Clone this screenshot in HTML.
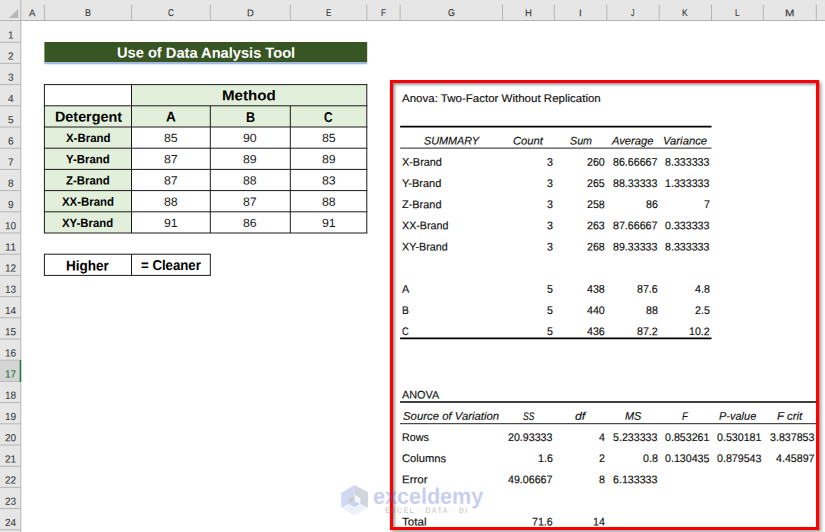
<!DOCTYPE html>
<html lang="en"><head><meta charset="utf-8"><title>Use of Data Analysis Tool</title>
<style>
html,body{margin:0;padding:0;background:#fff}
body{width:825px;height:532px;overflow:hidden;position:relative;font-family:"Liberation Sans",sans-serif}
#sheet{position:absolute;left:0;top:0;width:825px;height:532px;overflow:hidden}
#sheet svg{position:absolute;left:0;top:0}
#sheet div{position:absolute}
.t{position:absolute;white-space:pre;line-height:1.117;transform-origin:0 50%;display:block}
</style></head><body>
<div id="sheet">
<svg width="825" height="532" viewBox="0 0 825 532">
<defs><filter id="bl" x="-5%" y="-5%" width="110%" height="110%"><feGaussianBlur stdDeviation="1.6"/></filter></defs>
<rect x="0.00" y="0.00" width="825.00" height="20.50" fill="#e6e6e6" />
<rect x="0.00" y="0.00" width="20.80" height="532.00" fill="#e6e6e6" />
<rect x="0.00" y="360.70" width="20.00" height="20.20" fill="#d4d4d4" />
<line x1="0.00" y1="20.50" x2="825.00" y2="20.50" stroke="#b4b4b4" stroke-width="1"/>
<line x1="20.80" y1="0.00" x2="20.80" y2="532.00" stroke="#b4b4b4" stroke-width="1"/>
<line x1="44.40" y1="4.60" x2="44.40" y2="20.50" stroke="#b4b4b4" stroke-width="1"/>
<line x1="131.50" y1="4.60" x2="131.50" y2="20.50" stroke="#b4b4b4" stroke-width="1"/>
<line x1="210.30" y1="4.60" x2="210.30" y2="20.50" stroke="#b4b4b4" stroke-width="1"/>
<line x1="290.30" y1="4.60" x2="290.30" y2="20.50" stroke="#b4b4b4" stroke-width="1"/>
<line x1="366.80" y1="4.60" x2="366.80" y2="20.50" stroke="#b4b4b4" stroke-width="1"/>
<line x1="400.10" y1="4.60" x2="400.10" y2="20.50" stroke="#b4b4b4" stroke-width="1"/>
<line x1="502.50" y1="4.60" x2="502.50" y2="20.50" stroke="#b4b4b4" stroke-width="1"/>
<line x1="554.30" y1="4.60" x2="554.30" y2="20.50" stroke="#b4b4b4" stroke-width="1"/>
<line x1="606.80" y1="4.60" x2="606.80" y2="20.50" stroke="#b4b4b4" stroke-width="1"/>
<line x1="659.20" y1="4.60" x2="659.20" y2="20.50" stroke="#b4b4b4" stroke-width="1"/>
<line x1="711.50" y1="4.60" x2="711.50" y2="20.50" stroke="#b4b4b4" stroke-width="1"/>
<line x1="763.30" y1="4.60" x2="763.30" y2="20.50" stroke="#b4b4b4" stroke-width="1"/>
<line x1="816.30" y1="4.60" x2="816.30" y2="20.50" stroke="#b4b4b4" stroke-width="1"/>
<line x1="0.00" y1="42.20" x2="20.80" y2="42.20" stroke="#b4b4b4" stroke-width="1"/>
<line x1="0.00" y1="63.40" x2="20.80" y2="63.40" stroke="#b4b4b4" stroke-width="1"/>
<line x1="0.00" y1="84.60" x2="20.80" y2="84.60" stroke="#b4b4b4" stroke-width="1"/>
<line x1="0.00" y1="105.80" x2="20.80" y2="105.80" stroke="#b4b4b4" stroke-width="1"/>
<line x1="0.00" y1="127.00" x2="20.80" y2="127.00" stroke="#b4b4b4" stroke-width="1"/>
<line x1="0.00" y1="148.20" x2="20.80" y2="148.20" stroke="#b4b4b4" stroke-width="1"/>
<line x1="0.00" y1="169.40" x2="20.80" y2="169.40" stroke="#b4b4b4" stroke-width="1"/>
<line x1="0.00" y1="190.60" x2="20.80" y2="190.60" stroke="#b4b4b4" stroke-width="1"/>
<line x1="0.00" y1="211.80" x2="20.80" y2="211.80" stroke="#b4b4b4" stroke-width="1"/>
<line x1="0.00" y1="233.00" x2="20.80" y2="233.00" stroke="#b4b4b4" stroke-width="1"/>
<line x1="0.00" y1="254.20" x2="20.80" y2="254.20" stroke="#b4b4b4" stroke-width="1"/>
<line x1="0.00" y1="275.40" x2="20.80" y2="275.40" stroke="#b4b4b4" stroke-width="1"/>
<line x1="0.00" y1="296.60" x2="20.80" y2="296.60" stroke="#b4b4b4" stroke-width="1"/>
<line x1="0.00" y1="317.80" x2="20.80" y2="317.80" stroke="#b4b4b4" stroke-width="1"/>
<line x1="0.00" y1="339.00" x2="20.80" y2="339.00" stroke="#b4b4b4" stroke-width="1"/>
<line x1="0.00" y1="360.20" x2="20.80" y2="360.20" stroke="#b4b4b4" stroke-width="1"/>
<line x1="0.00" y1="381.40" x2="20.80" y2="381.40" stroke="#b4b4b4" stroke-width="1"/>
<line x1="0.00" y1="402.60" x2="20.80" y2="402.60" stroke="#b4b4b4" stroke-width="1"/>
<line x1="0.00" y1="423.80" x2="20.80" y2="423.80" stroke="#b4b4b4" stroke-width="1"/>
<line x1="0.00" y1="445.00" x2="20.80" y2="445.00" stroke="#b4b4b4" stroke-width="1"/>
<line x1="0.00" y1="466.20" x2="20.80" y2="466.20" stroke="#b4b4b4" stroke-width="1"/>
<line x1="0.00" y1="487.40" x2="20.80" y2="487.40" stroke="#b4b4b4" stroke-width="1"/>
<line x1="0.00" y1="508.60" x2="20.80" y2="508.60" stroke="#b4b4b4" stroke-width="1"/>
<line x1="0.00" y1="529.80" x2="20.80" y2="529.80" stroke="#b4b4b4" stroke-width="1"/>
<rect x="19.7" y="360.00" width="1.45" height="22.00" fill="#107c41"/>
<polygon points="18.2,8.8 18.2,18 9,18" fill="#b7b7b7"/>
<rect x="44.40" y="42.00" width="322.80" height="20.00" fill="#375623" />
<rect x="44.40" y="62.00" width="322.80" height="2.30" fill="#a3b8e3" />
<rect x="131.50" y="84.60" width="235.30" height="42.40" fill="#e2efda" />
<rect x="44.40" y="105.80" width="87.10" height="127.20" fill="#e2efda" />
<line x1="43.90" y1="84.60" x2="367.30" y2="84.60" stroke="#1a1a1a" stroke-width="1"/>
<line x1="43.90" y1="105.80" x2="367.30" y2="105.80" stroke="#1a1a1a" stroke-width="1"/>
<line x1="43.90" y1="127.00" x2="367.30" y2="127.00" stroke="#1a1a1a" stroke-width="1"/>
<line x1="43.90" y1="148.20" x2="367.30" y2="148.20" stroke="#1a1a1a" stroke-width="1"/>
<line x1="43.90" y1="169.40" x2="367.30" y2="169.40" stroke="#1a1a1a" stroke-width="1"/>
<line x1="43.90" y1="190.60" x2="367.30" y2="190.60" stroke="#1a1a1a" stroke-width="1"/>
<line x1="43.90" y1="211.80" x2="367.30" y2="211.80" stroke="#1a1a1a" stroke-width="1"/>
<line x1="43.90" y1="233.00" x2="367.30" y2="233.00" stroke="#1a1a1a" stroke-width="1"/>
<line x1="44.40" y1="84.60" x2="44.40" y2="233.00" stroke="#1a1a1a" stroke-width="1"/>
<line x1="131.50" y1="84.60" x2="131.50" y2="233.00" stroke="#1a1a1a" stroke-width="1"/>
<line x1="210.30" y1="105.80" x2="210.30" y2="233.00" stroke="#1a1a1a" stroke-width="1"/>
<line x1="290.30" y1="105.80" x2="290.30" y2="233.00" stroke="#1a1a1a" stroke-width="1"/>
<line x1="366.80" y1="84.60" x2="366.80" y2="233.00" stroke="#1a1a1a" stroke-width="1"/>
<line x1="43.90" y1="254.20" x2="210.80" y2="254.20" stroke="#1a1a1a" stroke-width="1"/>
<line x1="43.90" y1="275.40" x2="210.80" y2="275.40" stroke="#1a1a1a" stroke-width="1"/>
<line x1="44.40" y1="254.20" x2="44.40" y2="275.40" stroke="#1a1a1a" stroke-width="1"/>
<line x1="131.50" y1="254.20" x2="131.50" y2="275.40" stroke="#1a1a1a" stroke-width="1"/>
<line x1="210.30" y1="254.20" x2="210.30" y2="275.40" stroke="#1a1a1a" stroke-width="1"/>
<rect x="392.09999999999997" y="82.2" width="429.30000000000007" height="450.04999999999995" fill="#727c7e" opacity="0.65" filter="url(#bl)"/>
<rect x="389.90" y="80.00" width="429.30" height="450.05" fill="#ff0000" />
<g>
<path d="M341.2 492.7 L354.7 485.1 L354.7 495.3 L348.9 498.3 L348.9 503.9 L341.2 508.1 Z" fill="#cfd9f6"/>
<path d="M354.7 485.1 L367.9 492.3 L367.9 507.7 L360.2 503.9 L360.2 498.3 L354.7 495.3 Z" fill="#d0d4db"/>
<path d="M341.2 508.1 L348.9 503.9 L354.7 506.9 L360.2 503.9 L367.9 507.7 L354.7 515.6 Z" fill="#edf1f8"/>
<path d="M348.9 498.3 L354.7 495.3 L354.7 501.3 L348.9 503.9 Z" fill="#c9ccd3"/>
<path d="M354.7 495.3 L360.2 498.3 L360.2 503.9 L354.7 501.3 Z" fill="#f4f6fb"/>
<path d="M348.9 503.9 L354.7 501.3 L360.2 503.9 L354.7 506.9 Z" fill="#c6d3f5"/>
</g>
</svg>
<span class="t" style="left:29.42px;top:7px;line-height:11px;font-size:9.90px;font-weight:400;font-style:normal;color:#3c3c3c;-webkit-text-stroke:0.15px #3c3c3c;transform:translateY(0.20px) rotate(0.03deg) scaleX(0.9647)">A</span>
<span class="t" style="left:84.96px;top:7px;line-height:11px;font-size:9.90px;font-weight:400;font-style:normal;color:#3c3c3c;-webkit-text-stroke:0.15px #3c3c3c;transform:translateY(0.20px) rotate(0.03deg) scaleX(0.9069)">B</span>
<span class="t" style="left:167.96px;top:7px;line-height:11px;font-size:9.90px;font-weight:400;font-style:normal;color:#3c3c3c;-webkit-text-stroke:0.15px #3c3c3c;transform:translateY(0.20px) rotate(0.03deg) scaleX(0.8210)">C</span>
<span class="t" style="left:246.91px;top:7px;line-height:11px;font-size:9.90px;font-weight:400;font-style:normal;color:#3c3c3c;-webkit-text-stroke:0.15px #3c3c3c;transform:translateY(0.20px) rotate(0.03deg) scaleX(0.9474)">D</span>
<span class="t" style="left:325.86px;top:7px;line-height:11px;font-size:9.90px;font-weight:400;font-style:normal;color:#3c3c3c;-webkit-text-stroke:0.15px #3c3c3c;transform:translateY(0.20px) rotate(0.03deg) scaleX(0.8141)">E</span>
<span class="t" style="left:380.92px;top:7px;line-height:11px;font-size:9.90px;font-weight:400;font-style:normal;color:#3c3c3c;-webkit-text-stroke:0.15px #3c3c3c;transform:translateY(0.20px) rotate(0.03deg) scaleX(0.8364)">F</span>
<span class="t" style="left:447.83px;top:7px;line-height:11px;font-size:9.90px;font-weight:400;font-style:normal;color:#3c3c3c;-webkit-text-stroke:0.15px #3c3c3c;transform:translateY(0.20px) rotate(0.03deg) scaleX(0.9019)">G</span>
<span class="t" style="left:524.97px;top:7px;line-height:11px;font-size:9.90px;font-weight:400;font-style:normal;color:#3c3c3c;-webkit-text-stroke:0.15px #3c3c3c;transform:translateY(0.20px) rotate(0.03deg) scaleX(0.9594)">H</span>
<span class="t" style="left:579.16px;top:7px;line-height:11px;font-size:9.90px;font-weight:400;font-style:normal;color:#3c3c3c;-webkit-text-stroke:0.15px #3c3c3c;transform:translateY(0.20px) rotate(0.03deg) scaleX(1.0085)">I</span>
<span class="t" style="left:631.24px;top:7px;line-height:11px;font-size:9.90px;font-weight:400;font-style:normal;color:#3c3c3c;-webkit-text-stroke:0.15px #3c3c3c;transform:translateY(0.20px) rotate(0.03deg) scaleX(0.7091)">J</span>
<span class="t" style="left:682.49px;top:7px;line-height:11px;font-size:9.90px;font-weight:400;font-style:normal;color:#3c3c3c;-webkit-text-stroke:0.15px #3c3c3c;transform:translateY(0.20px) rotate(0.03deg) scaleX(0.8662)">K</span>
<span class="t" style="left:735.09px;top:7px;line-height:11px;font-size:9.90px;font-weight:400;font-style:normal;color:#3c3c3c;-webkit-text-stroke:0.15px #3c3c3c;transform:translateY(0.20px) rotate(0.03deg) scaleX(0.8406)">L</span>
<span class="t" style="left:785.09px;top:7px;line-height:11px;font-size:9.90px;font-weight:400;font-style:normal;color:#3c3c3c;-webkit-text-stroke:0.15px #3c3c3c;transform:translateY(0.20px) rotate(0.03deg) scaleX(1.1413)">M</span>
<span class="t" style="left:7.91px;top:29px;line-height:11px;font-size:10.30px;font-weight:400;font-style:normal;color:#3c3c3c;-webkit-text-stroke:0.1px #3c3c3c;transform:translateY(0.40px) rotate(0.03deg) scaleX(0.9741)">1</span>
<span class="t" style="left:7.91px;top:50px;line-height:11px;font-size:10.30px;font-weight:400;font-style:normal;color:#3c3c3c;-webkit-text-stroke:0.1px #3c3c3c;transform:translateY(0.60px) rotate(0.03deg) scaleX(0.9741)">2</span>
<span class="t" style="left:7.91px;top:71px;line-height:11px;font-size:10.30px;font-weight:400;font-style:normal;color:#3c3c3c;-webkit-text-stroke:0.1px #3c3c3c;transform:translateY(0.80px) rotate(0.03deg) scaleX(0.9741)">3</span>
<span class="t" style="left:7.91px;top:93px;line-height:11px;font-size:10.30px;font-weight:400;font-style:normal;color:#3c3c3c;-webkit-text-stroke:0.1px #3c3c3c;transform:translateY(0.00px) rotate(0.03deg) scaleX(0.9741)">4</span>
<span class="t" style="left:7.91px;top:114px;line-height:11px;font-size:10.30px;font-weight:400;font-style:normal;color:#3c3c3c;-webkit-text-stroke:0.1px #3c3c3c;transform:translateY(0.20px) rotate(0.03deg) scaleX(0.9741)">5</span>
<span class="t" style="left:7.91px;top:135px;line-height:11px;font-size:10.30px;font-weight:400;font-style:normal;color:#3c3c3c;-webkit-text-stroke:0.1px #3c3c3c;transform:translateY(0.40px) rotate(0.03deg) scaleX(0.9741)">6</span>
<span class="t" style="left:7.91px;top:156px;line-height:11px;font-size:10.30px;font-weight:400;font-style:normal;color:#3c3c3c;-webkit-text-stroke:0.1px #3c3c3c;transform:translateY(0.60px) rotate(0.03deg) scaleX(0.9741)">7</span>
<span class="t" style="left:7.91px;top:177px;line-height:11px;font-size:10.30px;font-weight:400;font-style:normal;color:#3c3c3c;-webkit-text-stroke:0.1px #3c3c3c;transform:translateY(0.80px) rotate(0.03deg) scaleX(0.9741)">8</span>
<span class="t" style="left:7.91px;top:198px;line-height:11px;font-size:10.30px;font-weight:400;font-style:normal;color:#3c3c3c;-webkit-text-stroke:0.1px #3c3c3c;transform:translateY(1.00px) rotate(0.03deg) scaleX(0.9741)">9</span>
<span class="t" style="left:5.12px;top:220px;line-height:11px;font-size:10.30px;font-weight:400;font-style:normal;color:#3c3c3c;-webkit-text-stroke:0.1px #3c3c3c;transform:translateY(0.20px) rotate(0.03deg) scaleX(0.9741)">10</span>
<span class="t" style="left:5.12px;top:241px;line-height:11px;font-size:10.30px;font-weight:400;font-style:normal;color:#3c3c3c;-webkit-text-stroke:0.1px #3c3c3c;transform:translateY(0.40px) rotate(0.03deg) scaleX(1.0437)">11</span>
<span class="t" style="left:5.12px;top:262px;line-height:11px;font-size:10.30px;font-weight:400;font-style:normal;color:#3c3c3c;-webkit-text-stroke:0.1px #3c3c3c;transform:translateY(0.60px) rotate(0.03deg) scaleX(0.9741)">12</span>
<span class="t" style="left:5.12px;top:283px;line-height:11px;font-size:10.30px;font-weight:400;font-style:normal;color:#3c3c3c;-webkit-text-stroke:0.1px #3c3c3c;transform:translateY(0.80px) rotate(0.03deg) scaleX(0.9741)">13</span>
<span class="t" style="left:5.12px;top:305px;line-height:11px;font-size:10.30px;font-weight:400;font-style:normal;color:#3c3c3c;-webkit-text-stroke:0.1px #3c3c3c;transform:translateY(0.00px) rotate(0.03deg) scaleX(0.9741)">14</span>
<span class="t" style="left:5.12px;top:326px;line-height:11px;font-size:10.30px;font-weight:400;font-style:normal;color:#3c3c3c;-webkit-text-stroke:0.1px #3c3c3c;transform:translateY(0.20px) rotate(0.03deg) scaleX(0.9741)">15</span>
<span class="t" style="left:5.12px;top:347px;line-height:11px;font-size:10.30px;font-weight:400;font-style:normal;color:#3c3c3c;-webkit-text-stroke:0.1px #3c3c3c;transform:translateY(0.40px) rotate(0.03deg) scaleX(0.9741)">16</span>
<span class="t" style="left:5.12px;top:368px;line-height:11px;font-size:10.30px;font-weight:400;font-style:normal;color:#1d6b40;-webkit-text-stroke:0.1px #1d6b40;transform:translateY(0.60px) rotate(0.03deg) scaleX(0.9741)">17</span>
<span class="t" style="left:5.12px;top:389px;line-height:11px;font-size:10.30px;font-weight:400;font-style:normal;color:#3c3c3c;-webkit-text-stroke:0.1px #3c3c3c;transform:translateY(0.80px) rotate(0.03deg) scaleX(0.9741)">18</span>
<span class="t" style="left:5.12px;top:411px;line-height:11px;font-size:10.30px;font-weight:400;font-style:normal;color:#3c3c3c;-webkit-text-stroke:0.1px #3c3c3c;transform:translateY(0.00px) rotate(0.03deg) scaleX(0.9741)">19</span>
<span class="t" style="left:5.12px;top:432px;line-height:11px;font-size:10.30px;font-weight:400;font-style:normal;color:#3c3c3c;-webkit-text-stroke:0.1px #3c3c3c;transform:translateY(0.20px) rotate(0.03deg) scaleX(0.9741)">20</span>
<span class="t" style="left:5.12px;top:453px;line-height:11px;font-size:10.30px;font-weight:400;font-style:normal;color:#3c3c3c;-webkit-text-stroke:0.1px #3c3c3c;transform:translateY(0.40px) rotate(0.03deg) scaleX(0.9741)">21</span>
<span class="t" style="left:5.12px;top:474px;line-height:11px;font-size:10.30px;font-weight:400;font-style:normal;color:#3c3c3c;-webkit-text-stroke:0.1px #3c3c3c;transform:translateY(0.60px) rotate(0.03deg) scaleX(0.9741)">22</span>
<span class="t" style="left:5.12px;top:495px;line-height:11px;font-size:10.30px;font-weight:400;font-style:normal;color:#3c3c3c;-webkit-text-stroke:0.1px #3c3c3c;transform:translateY(0.80px) rotate(0.03deg) scaleX(0.9741)">23</span>
<span class="t" style="left:5.12px;top:517px;line-height:11px;font-size:10.30px;font-weight:400;font-style:normal;color:#3c3c3c;-webkit-text-stroke:0.1px #3c3c3c;transform:translateY(0.00px) rotate(0.03deg) scaleX(0.9741)">24</span>
<span class="t" style="left:117.18px;top:44px;line-height:16px;font-size:14.60px;font-weight:700;font-style:normal;color:#fff;transform:translateY(0.60px) rotate(0.03deg) scaleX(1.0032)">Use of Data Analysis Tool</span>
<span class="t" style="left:222.26px;top:87px;line-height:16px;font-size:14.24px;font-weight:700;font-style:normal;color:#000;transform:translateY(0.30px) rotate(0.03deg) scaleX(1.0625)">Method</span>
<span class="t" style="left:55.02px;top:108px;line-height:16px;font-size:14.24px;font-weight:700;font-style:normal;color:#000;transform:translateY(0.60px) rotate(0.03deg) scaleX(1.0089)">Detergent</span>
<span class="t" style="left:166.00px;top:108px;line-height:16px;font-size:14.24px;font-weight:700;font-style:normal;color:#000;transform:translateY(0.60px) rotate(0.03deg) scaleX(0.9522)">A</span>
<span class="t" style="left:245.77px;top:108px;line-height:16px;font-size:14.24px;font-weight:700;font-style:normal;color:#000;transform:translateY(0.60px) rotate(0.03deg) scaleX(0.8809)">B</span>
<span class="t" style="left:324.27px;top:108px;line-height:16px;font-size:14.24px;font-weight:700;font-style:normal;color:#000;transform:translateY(0.60px) rotate(0.03deg) scaleX(0.8317)">C</span>
<span class="t" style="left:65.71px;top:131px;line-height:14px;font-size:11.93px;font-weight:700;font-style:normal;color:#000;transform:translateY(0.10px) rotate(0.03deg) scaleX(0.9589)">X-Brand</span>
<span class="t" style="left:164.04px;top:131px;line-height:14px;font-size:11.93px;font-weight:400;font-style:normal;color:#1a1a1a;transform:translateY(0.10px) rotate(0.03deg) scaleX(1.0342)">85</span>
<span class="t" style="left:243.44px;top:131px;line-height:14px;font-size:11.93px;font-weight:400;font-style:normal;color:#1a1a1a;transform:translateY(0.10px) rotate(0.03deg) scaleX(1.0342)">90</span>
<span class="t" style="left:321.69px;top:131px;line-height:14px;font-size:11.93px;font-weight:400;font-style:normal;color:#1a1a1a;transform:translateY(0.10px) rotate(0.03deg) scaleX(1.0342)">85</span>
<span class="t" style="left:66.07px;top:152px;line-height:14px;font-size:11.93px;font-weight:700;font-style:normal;color:#000;transform:translateY(0.30px) rotate(0.03deg) scaleX(0.9569)">Y-Brand</span>
<span class="t" style="left:164.04px;top:152px;line-height:14px;font-size:11.93px;font-weight:400;font-style:normal;color:#1a1a1a;transform:translateY(0.30px) rotate(0.03deg) scaleX(1.0342)">87</span>
<span class="t" style="left:243.44px;top:152px;line-height:14px;font-size:11.93px;font-weight:400;font-style:normal;color:#1a1a1a;transform:translateY(0.30px) rotate(0.03deg) scaleX(1.0342)">89</span>
<span class="t" style="left:321.69px;top:152px;line-height:14px;font-size:11.93px;font-weight:400;font-style:normal;color:#1a1a1a;transform:translateY(0.30px) rotate(0.03deg) scaleX(1.0342)">89</span>
<span class="t" style="left:66.11px;top:173px;line-height:14px;font-size:11.93px;font-weight:700;font-style:normal;color:#000;transform:translateY(0.50px) rotate(0.03deg) scaleX(0.9557)">Z-Brand</span>
<span class="t" style="left:164.04px;top:173px;line-height:14px;font-size:11.93px;font-weight:400;font-style:normal;color:#1a1a1a;transform:translateY(0.50px) rotate(0.03deg) scaleX(1.0342)">87</span>
<span class="t" style="left:243.44px;top:173px;line-height:14px;font-size:11.93px;font-weight:400;font-style:normal;color:#1a1a1a;transform:translateY(0.50px) rotate(0.03deg) scaleX(1.0342)">88</span>
<span class="t" style="left:321.69px;top:173px;line-height:14px;font-size:11.93px;font-weight:400;font-style:normal;color:#1a1a1a;transform:translateY(0.50px) rotate(0.03deg) scaleX(1.0342)">83</span>
<span class="t" style="left:61.99px;top:194px;line-height:14px;font-size:11.93px;font-weight:700;font-style:normal;color:#000;transform:translateY(0.70px) rotate(0.03deg) scaleX(0.9557)">XX-Brand</span>
<span class="t" style="left:164.04px;top:194px;line-height:14px;font-size:11.93px;font-weight:400;font-style:normal;color:#1a1a1a;transform:translateY(0.70px) rotate(0.03deg) scaleX(1.0342)">88</span>
<span class="t" style="left:243.44px;top:194px;line-height:14px;font-size:11.93px;font-weight:400;font-style:normal;color:#1a1a1a;transform:translateY(0.70px) rotate(0.03deg) scaleX(1.0342)">87</span>
<span class="t" style="left:321.69px;top:194px;line-height:14px;font-size:11.93px;font-weight:400;font-style:normal;color:#1a1a1a;transform:translateY(0.70px) rotate(0.03deg) scaleX(1.0342)">88</span>
<span class="t" style="left:62.35px;top:215px;line-height:14px;font-size:11.93px;font-weight:700;font-style:normal;color:#000;transform:translateY(0.90px) rotate(0.03deg) scaleX(0.9540)">XY-Brand</span>
<span class="t" style="left:164.04px;top:215px;line-height:14px;font-size:11.93px;font-weight:400;font-style:normal;color:#1a1a1a;transform:translateY(0.90px) rotate(0.03deg) scaleX(1.0342)">91</span>
<span class="t" style="left:243.44px;top:215px;line-height:14px;font-size:11.93px;font-weight:400;font-style:normal;color:#1a1a1a;transform:translateY(0.90px) rotate(0.03deg) scaleX(1.0342)">86</span>
<span class="t" style="left:321.69px;top:215px;line-height:14px;font-size:11.93px;font-weight:400;font-style:normal;color:#1a1a1a;transform:translateY(0.90px) rotate(0.03deg) scaleX(1.0342)">91</span>
<span class="t" style="left:65.64px;top:257px;line-height:16px;font-size:14.24px;font-weight:700;font-style:normal;color:#000;transform:translateY(0.40px) rotate(0.03deg) scaleX(0.9496)">Higher</span>
<span class="t" style="left:141.16px;top:257px;line-height:16px;font-size:14.24px;font-weight:700;font-style:normal;color:#000;transform:translateY(0.40px) rotate(0.03deg) scaleX(0.9281)">= Cleaner</span>
<div id="pic" style="left:393.00px;top:83.10px;width:423.10px;height:443.85px;background:#fff;box-shadow:inset 1.8px 1.8px 2.6px rgba(118,132,136,0.85)"></div>
<svg width="825" height="532" viewBox="0 0 825 532">
<line x1="400.10" y1="126.60" x2="711.50" y2="126.60" stroke="#000" stroke-width="1.7"/>
<line x1="400.10" y1="148.10" x2="711.50" y2="148.10" stroke="#222" stroke-width="1.0"/>
<line x1="400.10" y1="338.40" x2="711.50" y2="338.40" stroke="#000" stroke-width="1.7"/>
<line x1="400.10" y1="402.00" x2="816.20" y2="402.00" stroke="#000" stroke-width="1.7"/>
<line x1="400.10" y1="423.70" x2="816.20" y2="423.70" stroke="#222" stroke-width="1.0"/>
</svg>
<span class="t" style="left:402.40px;top:92px;line-height:12px;font-size:11.04px;font-weight:400;font-style:normal;color:#111;-webkit-text-stroke:0.15px #111;transform:translateY(0.00px) rotate(0.03deg) scaleX(1.0435)">Anova: Two-Factor Without Replication</span>
<span class="t" style="left:423.80px;top:134px;line-height:12px;font-size:11.04px;font-weight:400;font-style:italic;color:#111;-webkit-text-stroke:0.15px #111;transform:translateY(0.40px) rotate(0.03deg) scaleX(0.9823)">SUMMARY</span>
<span class="t" style="left:513.44px;top:134px;line-height:12px;font-size:11.04px;font-weight:400;font-style:italic;color:#111;-webkit-text-stroke:0.15px #111;transform:translateY(0.40px) rotate(0.03deg) scaleX(1.0161)">Count</span>
<span class="t" style="left:569.55px;top:134px;line-height:12px;font-size:11.04px;font-weight:400;font-style:italic;color:#111;-webkit-text-stroke:0.15px #111;transform:translateY(0.40px) rotate(0.03deg) scaleX(0.9699)">Sum</span>
<span class="t" style="left:612.24px;top:134px;line-height:12px;font-size:11.04px;font-weight:400;font-style:italic;color:#111;-webkit-text-stroke:0.15px #111;transform:translateY(0.40px) rotate(0.03deg) scaleX(1.0152)">Average</span>
<span class="t" style="left:663.30px;top:134px;line-height:12px;font-size:11.04px;font-weight:400;font-style:italic;color:#111;-webkit-text-stroke:0.15px #111;transform:translateY(0.40px) rotate(0.03deg) scaleX(1.0219)">Variance</span>
<span class="t" style="left:402.40px;top:155px;line-height:12px;font-size:11.04px;font-weight:400;font-style:normal;color:#111;-webkit-text-stroke:0.15px #111;transform:translateY(0.79px) rotate(0.03deg) scaleX(0.9860)">X-Brand</span>
<span class="t" style="left:546.56px;top:155px;line-height:12px;font-size:11.04px;font-weight:400;font-style:normal;color:#111;-webkit-text-stroke:0.15px #111;transform:translateY(0.79px) rotate(0.03deg) scaleX(0.9670)">3</span>
<span class="t" style="left:587.19px;top:155px;line-height:12px;font-size:11.04px;font-weight:400;font-style:normal;color:#111;-webkit-text-stroke:0.15px #111;transform:translateY(0.79px) rotate(0.03deg) scaleX(0.9670)">260</span>
<span class="t" style="left:612.90px;top:155px;line-height:12px;font-size:11.04px;font-weight:400;font-style:normal;color:#111;-webkit-text-stroke:0.15px #111;transform:translateY(0.79px) rotate(0.03deg) scaleX(0.9668)">86.66667</span>
<span class="t" style="left:665.20px;top:155px;line-height:12px;font-size:11.04px;font-weight:400;font-style:normal;color:#111;-webkit-text-stroke:0.15px #111;transform:translateY(0.79px) rotate(0.03deg) scaleX(0.9668)">8.333333</span>
<span class="t" style="left:402.40px;top:176px;line-height:12px;font-size:11.04px;font-weight:400;font-style:normal;color:#111;-webkit-text-stroke:0.15px #111;transform:translateY(0.96px) rotate(0.03deg) scaleX(0.9957)">Y-Brand</span>
<span class="t" style="left:546.56px;top:176px;line-height:12px;font-size:11.04px;font-weight:400;font-style:normal;color:#111;-webkit-text-stroke:0.15px #111;transform:translateY(0.96px) rotate(0.03deg) scaleX(0.9670)">3</span>
<span class="t" style="left:587.19px;top:176px;line-height:12px;font-size:11.04px;font-weight:400;font-style:normal;color:#111;-webkit-text-stroke:0.15px #111;transform:translateY(0.96px) rotate(0.03deg) scaleX(0.9670)">265</span>
<span class="t" style="left:612.90px;top:176px;line-height:12px;font-size:11.04px;font-weight:400;font-style:normal;color:#111;-webkit-text-stroke:0.15px #111;transform:translateY(0.96px) rotate(0.03deg) scaleX(0.9668)">88.33333</span>
<span class="t" style="left:665.20px;top:176px;line-height:12px;font-size:11.04px;font-weight:400;font-style:normal;color:#111;-webkit-text-stroke:0.15px #111;transform:translateY(0.96px) rotate(0.03deg) scaleX(0.9668)">1.333333</span>
<span class="t" style="left:402.40px;top:198px;line-height:12px;font-size:11.04px;font-weight:400;font-style:normal;color:#111;-webkit-text-stroke:0.15px #111;transform:translateY(0.12px) rotate(0.03deg) scaleX(0.9909)">Z-Brand</span>
<span class="t" style="left:546.56px;top:198px;line-height:12px;font-size:11.04px;font-weight:400;font-style:normal;color:#111;-webkit-text-stroke:0.15px #111;transform:translateY(0.12px) rotate(0.03deg) scaleX(0.9670)">3</span>
<span class="t" style="left:587.19px;top:198px;line-height:12px;font-size:11.04px;font-weight:400;font-style:normal;color:#111;-webkit-text-stroke:0.15px #111;transform:translateY(0.12px) rotate(0.03deg) scaleX(0.9670)">258</span>
<span class="t" style="left:645.53px;top:198px;line-height:12px;font-size:11.04px;font-weight:400;font-style:normal;color:#111;-webkit-text-stroke:0.15px #111;transform:translateY(0.12px) rotate(0.03deg) scaleX(0.9670)">86</span>
<span class="t" style="left:703.76px;top:198px;line-height:12px;font-size:11.04px;font-weight:400;font-style:normal;color:#111;-webkit-text-stroke:0.15px #111;transform:translateY(0.12px) rotate(0.03deg) scaleX(0.9670)">7</span>
<span class="t" style="left:402.40px;top:219px;line-height:12px;font-size:11.04px;font-weight:400;font-style:normal;color:#111;-webkit-text-stroke:0.15px #111;transform:translateY(0.29px) rotate(0.03deg) scaleX(0.9702)">XX-Brand</span>
<span class="t" style="left:546.56px;top:219px;line-height:12px;font-size:11.04px;font-weight:400;font-style:normal;color:#111;-webkit-text-stroke:0.15px #111;transform:translateY(0.29px) rotate(0.03deg) scaleX(0.9670)">3</span>
<span class="t" style="left:587.19px;top:219px;line-height:12px;font-size:11.04px;font-weight:400;font-style:normal;color:#111;-webkit-text-stroke:0.15px #111;transform:translateY(0.29px) rotate(0.03deg) scaleX(0.9670)">263</span>
<span class="t" style="left:612.90px;top:219px;line-height:12px;font-size:11.04px;font-weight:400;font-style:normal;color:#111;-webkit-text-stroke:0.15px #111;transform:translateY(0.29px) rotate(0.03deg) scaleX(0.9668)">87.66667</span>
<span class="t" style="left:665.20px;top:219px;line-height:12px;font-size:11.04px;font-weight:400;font-style:normal;color:#111;-webkit-text-stroke:0.15px #111;transform:translateY(0.29px) rotate(0.03deg) scaleX(0.9668)">0.333333</span>
<span class="t" style="left:402.40px;top:240px;line-height:12px;font-size:11.04px;font-weight:400;font-style:normal;color:#111;-webkit-text-stroke:0.15px #111;transform:translateY(0.45px) rotate(0.03deg) scaleX(0.9780)">XY-Brand</span>
<span class="t" style="left:546.56px;top:240px;line-height:12px;font-size:11.04px;font-weight:400;font-style:normal;color:#111;-webkit-text-stroke:0.15px #111;transform:translateY(0.45px) rotate(0.03deg) scaleX(0.9670)">3</span>
<span class="t" style="left:587.19px;top:240px;line-height:12px;font-size:11.04px;font-weight:400;font-style:normal;color:#111;-webkit-text-stroke:0.15px #111;transform:translateY(0.45px) rotate(0.03deg) scaleX(0.9670)">268</span>
<span class="t" style="left:612.90px;top:240px;line-height:12px;font-size:11.04px;font-weight:400;font-style:normal;color:#111;-webkit-text-stroke:0.15px #111;transform:translateY(0.45px) rotate(0.03deg) scaleX(0.9668)">89.33333</span>
<span class="t" style="left:665.20px;top:240px;line-height:12px;font-size:11.04px;font-weight:400;font-style:normal;color:#111;-webkit-text-stroke:0.15px #111;transform:translateY(0.45px) rotate(0.03deg) scaleX(0.9668)">8.333333</span>
<span class="t" style="left:402.40px;top:282px;line-height:12px;font-size:11.04px;font-weight:400;font-style:normal;color:#111;-webkit-text-stroke:0.15px #111;transform:translateY(0.78px) rotate(0.03deg) scaleX(0.9844)">A</span>
<span class="t" style="left:546.56px;top:282px;line-height:12px;font-size:11.04px;font-weight:400;font-style:normal;color:#111;-webkit-text-stroke:0.15px #111;transform:translateY(0.78px) rotate(0.03deg) scaleX(0.9670)">5</span>
<span class="t" style="left:587.19px;top:282px;line-height:12px;font-size:11.04px;font-weight:400;font-style:normal;color:#111;-webkit-text-stroke:0.15px #111;transform:translateY(0.78px) rotate(0.03deg) scaleX(0.9670)">438</span>
<span class="t" style="left:636.64px;top:282px;line-height:12px;font-size:11.04px;font-weight:400;font-style:normal;color:#111;-webkit-text-stroke:0.15px #111;transform:translateY(0.78px) rotate(0.03deg) scaleX(0.9666)">87.6</span>
<span class="t" style="left:694.87px;top:282px;line-height:12px;font-size:11.04px;font-weight:400;font-style:normal;color:#111;-webkit-text-stroke:0.15px #111;transform:translateY(0.78px) rotate(0.03deg) scaleX(0.9664)">4.8</span>
<span class="t" style="left:402.40px;top:303px;line-height:12px;font-size:11.04px;font-weight:400;font-style:normal;color:#111;-webkit-text-stroke:0.15px #111;transform:translateY(0.95px) rotate(0.03deg) scaleX(0.9255)">B</span>
<span class="t" style="left:546.56px;top:303px;line-height:12px;font-size:11.04px;font-weight:400;font-style:normal;color:#111;-webkit-text-stroke:0.15px #111;transform:translateY(0.95px) rotate(0.03deg) scaleX(0.9670)">5</span>
<span class="t" style="left:587.19px;top:303px;line-height:12px;font-size:11.04px;font-weight:400;font-style:normal;color:#111;-webkit-text-stroke:0.15px #111;transform:translateY(0.95px) rotate(0.03deg) scaleX(0.9670)">440</span>
<span class="t" style="left:645.53px;top:303px;line-height:12px;font-size:11.04px;font-weight:400;font-style:normal;color:#111;-webkit-text-stroke:0.15px #111;transform:translateY(0.95px) rotate(0.03deg) scaleX(0.9670)">88</span>
<span class="t" style="left:694.87px;top:303px;line-height:12px;font-size:11.04px;font-weight:400;font-style:normal;color:#111;-webkit-text-stroke:0.15px #111;transform:translateY(0.95px) rotate(0.03deg) scaleX(0.9664)">2.5</span>
<span class="t" style="left:402.40px;top:325px;line-height:12px;font-size:11.04px;font-weight:400;font-style:normal;color:#111;-webkit-text-stroke:0.15px #111;transform:translateY(0.12px) rotate(0.03deg) scaleX(0.8379)">C</span>
<span class="t" style="left:546.56px;top:325px;line-height:12px;font-size:11.04px;font-weight:400;font-style:normal;color:#111;-webkit-text-stroke:0.15px #111;transform:translateY(0.12px) rotate(0.03deg) scaleX(0.9670)">5</span>
<span class="t" style="left:587.19px;top:325px;line-height:12px;font-size:11.04px;font-weight:400;font-style:normal;color:#111;-webkit-text-stroke:0.15px #111;transform:translateY(0.12px) rotate(0.03deg) scaleX(0.9670)">436</span>
<span class="t" style="left:636.64px;top:325px;line-height:12px;font-size:11.04px;font-weight:400;font-style:normal;color:#111;-webkit-text-stroke:0.15px #111;transform:translateY(0.12px) rotate(0.03deg) scaleX(0.9666)">87.2</span>
<span class="t" style="left:688.94px;top:325px;line-height:12px;font-size:11.04px;font-weight:400;font-style:normal;color:#111;-webkit-text-stroke:0.15px #111;transform:translateY(0.12px) rotate(0.03deg) scaleX(0.9666)">10.2</span>
<span class="t" style="left:402.40px;top:388px;line-height:12px;font-size:11.04px;font-weight:400;font-style:normal;color:#111;-webkit-text-stroke:0.15px #111;transform:translateY(0.61px) rotate(0.03deg) scaleX(0.9846)">ANOVA</span>
<span class="t" style="left:403.19px;top:409px;line-height:12px;font-size:11.04px;font-weight:400;font-style:italic;color:#111;-webkit-text-stroke:0.15px #111;transform:translateY(0.77px) rotate(0.03deg) scaleX(1.0297)">Source of Variation</span>
<span class="t" style="left:522.74px;top:409px;line-height:12px;font-size:11.04px;font-weight:400;font-style:italic;color:#111;-webkit-text-stroke:0.15px #111;transform:translateY(0.77px) rotate(0.03deg) scaleX(0.7693)">SS</span>
<span class="t" style="left:575.42px;top:409px;line-height:12px;font-size:11.04px;font-weight:400;font-style:italic;color:#111;-webkit-text-stroke:0.15px #111;transform:translateY(0.77px) rotate(0.03deg) scaleX(1.1149)">df</span>
<span class="t" style="left:624.81px;top:409px;line-height:12px;font-size:11.04px;font-weight:400;font-style:italic;color:#111;-webkit-text-stroke:0.15px #111;transform:translateY(0.77px) rotate(0.03deg) scaleX(0.9889)">MS</span>
<span class="t" style="left:682.47px;top:409px;line-height:12px;font-size:11.04px;font-weight:400;font-style:italic;color:#111;-webkit-text-stroke:0.15px #111;transform:translateY(0.77px) rotate(0.03deg) scaleX(0.8536)">F</span>
<span class="t" style="left:718.77px;top:409px;line-height:12px;font-size:11.04px;font-weight:400;font-style:italic;color:#111;-webkit-text-stroke:0.15px #111;transform:translateY(0.77px) rotate(0.03deg) scaleX(0.9958)">P-value</span>
<span class="t" style="left:777.22px;top:409px;line-height:12px;font-size:11.04px;font-weight:400;font-style:italic;color:#111;-webkit-text-stroke:0.15px #111;transform:translateY(0.77px) rotate(0.03deg) scaleX(1.0345)">F crit</span>
<span class="t" style="left:402.40px;top:430px;line-height:12px;font-size:11.04px;font-weight:400;font-style:normal;color:#111;-webkit-text-stroke:0.15px #111;transform:translateY(0.94px) rotate(0.03deg) scaleX(0.9726)">Rows</span>
<span class="t" style="left:508.00px;top:430px;line-height:12px;font-size:11.04px;font-weight:400;font-style:normal;color:#111;-webkit-text-stroke:0.15px #111;transform:translateY(0.94px) rotate(0.03deg) scaleX(0.9668)">20.93333</span>
<span class="t" style="left:599.06px;top:430px;line-height:12px;font-size:11.04px;font-weight:400;font-style:normal;color:#111;-webkit-text-stroke:0.15px #111;transform:translateY(0.94px) rotate(0.03deg) scaleX(0.9670)">4</span>
<span class="t" style="left:612.90px;top:430px;line-height:12px;font-size:11.04px;font-weight:400;font-style:normal;color:#111;-webkit-text-stroke:0.15px #111;transform:translateY(0.94px) rotate(0.03deg) scaleX(0.9668)">5.233333</span>
<span class="t" style="left:665.20px;top:430px;line-height:12px;font-size:11.04px;font-weight:400;font-style:normal;color:#111;-webkit-text-stroke:0.15px #111;transform:translateY(0.94px) rotate(0.03deg) scaleX(0.9668)">0.853261</span>
<span class="t" style="left:717.00px;top:430px;line-height:12px;font-size:11.04px;font-weight:400;font-style:normal;color:#111;-webkit-text-stroke:0.15px #111;transform:translateY(0.94px) rotate(0.03deg) scaleX(0.9668)">0.530181</span>
<span class="t" style="left:770.00px;top:430px;line-height:12px;font-size:11.04px;font-weight:400;font-style:normal;color:#111;-webkit-text-stroke:0.15px #111;transform:translateY(0.94px) rotate(0.03deg) scaleX(0.9668)">3.837853</span>
<span class="t" style="left:402.40px;top:452px;line-height:12px;font-size:11.04px;font-weight:400;font-style:normal;color:#111;-webkit-text-stroke:0.15px #111;transform:translateY(0.11px) rotate(0.03deg) scaleX(1.0155)">Columns</span>
<span class="t" style="left:537.67px;top:452px;line-height:12px;font-size:11.04px;font-weight:400;font-style:normal;color:#111;-webkit-text-stroke:0.15px #111;transform:translateY(0.11px) rotate(0.03deg) scaleX(0.9664)">1.6</span>
<span class="t" style="left:599.06px;top:452px;line-height:12px;font-size:11.04px;font-weight:400;font-style:normal;color:#111;-webkit-text-stroke:0.15px #111;transform:translateY(0.11px) rotate(0.03deg) scaleX(0.9670)">2</span>
<span class="t" style="left:642.57px;top:452px;line-height:12px;font-size:11.04px;font-weight:400;font-style:normal;color:#111;-webkit-text-stroke:0.15px #111;transform:translateY(0.11px) rotate(0.03deg) scaleX(0.9664)">0.8</span>
<span class="t" style="left:665.20px;top:452px;line-height:12px;font-size:11.04px;font-weight:400;font-style:normal;color:#111;-webkit-text-stroke:0.15px #111;transform:translateY(0.11px) rotate(0.03deg) scaleX(0.9668)">0.130435</span>
<span class="t" style="left:717.00px;top:452px;line-height:12px;font-size:11.04px;font-weight:400;font-style:normal;color:#111;-webkit-text-stroke:0.15px #111;transform:translateY(0.11px) rotate(0.03deg) scaleX(0.9668)">0.879543</span>
<span class="t" style="left:775.93px;top:452px;line-height:12px;font-size:11.04px;font-weight:400;font-style:normal;color:#111;-webkit-text-stroke:0.15px #111;transform:translateY(0.11px) rotate(0.03deg) scaleX(0.9668)">4.45897</span>
<span class="t" style="left:402.40px;top:473px;line-height:12px;font-size:11.04px;font-weight:400;font-style:normal;color:#111;-webkit-text-stroke:0.15px #111;transform:translateY(0.27px) rotate(0.03deg) scaleX(1.0446)">Error</span>
<span class="t" style="left:508.00px;top:473px;line-height:12px;font-size:11.04px;font-weight:400;font-style:normal;color:#111;-webkit-text-stroke:0.15px #111;transform:translateY(0.27px) rotate(0.03deg) scaleX(0.9668)">49.06667</span>
<span class="t" style="left:599.06px;top:473px;line-height:12px;font-size:11.04px;font-weight:400;font-style:normal;color:#111;-webkit-text-stroke:0.15px #111;transform:translateY(0.27px) rotate(0.03deg) scaleX(0.9670)">8</span>
<span class="t" style="left:612.90px;top:473px;line-height:12px;font-size:11.04px;font-weight:400;font-style:normal;color:#111;-webkit-text-stroke:0.15px #111;transform:translateY(0.27px) rotate(0.03deg) scaleX(0.9668)">6.133333</span>
<span class="t" style="left:402.40px;top:515px;line-height:12px;font-size:11.04px;font-weight:400;font-style:normal;color:#111;-webkit-text-stroke:0.15px #111;transform:translateY(0.60px) rotate(0.03deg) scaleX(1.0514)">Total</span>
<span class="t" style="left:531.74px;top:515px;line-height:12px;font-size:11.04px;font-weight:400;font-style:normal;color:#111;-webkit-text-stroke:0.15px #111;transform:translateY(0.60px) rotate(0.03deg) scaleX(0.9666)">71.6</span>
<span class="t" style="left:593.13px;top:515px;line-height:12px;font-size:11.04px;font-weight:400;font-style:normal;color:#111;-webkit-text-stroke:0.15px #111;transform:translateY(0.60px) rotate(0.03deg) scaleX(0.9670)">14</span>
<span class="t" style="left:373.00px;top:483px;line-height:25px;font-size:22.50px;font-weight:700;font-style:normal;color:rgba(62,82,202,0.3);transform:translateY(0.80px) rotate(0.03deg) scaleX(0.9576)">exceldemy</span>
<span class="t" style="left:384.80px;top:506px;line-height:9px;font-size:8.00px;font-weight:700;font-style:normal;color:rgba(98,98,98,0.3);letter-spacing:1.3px;transform:translateY(0.20px) rotate(0.03deg) scaleX(0.9118)">EXCEL · DATA · BI</span>
</div>
</body></html>
